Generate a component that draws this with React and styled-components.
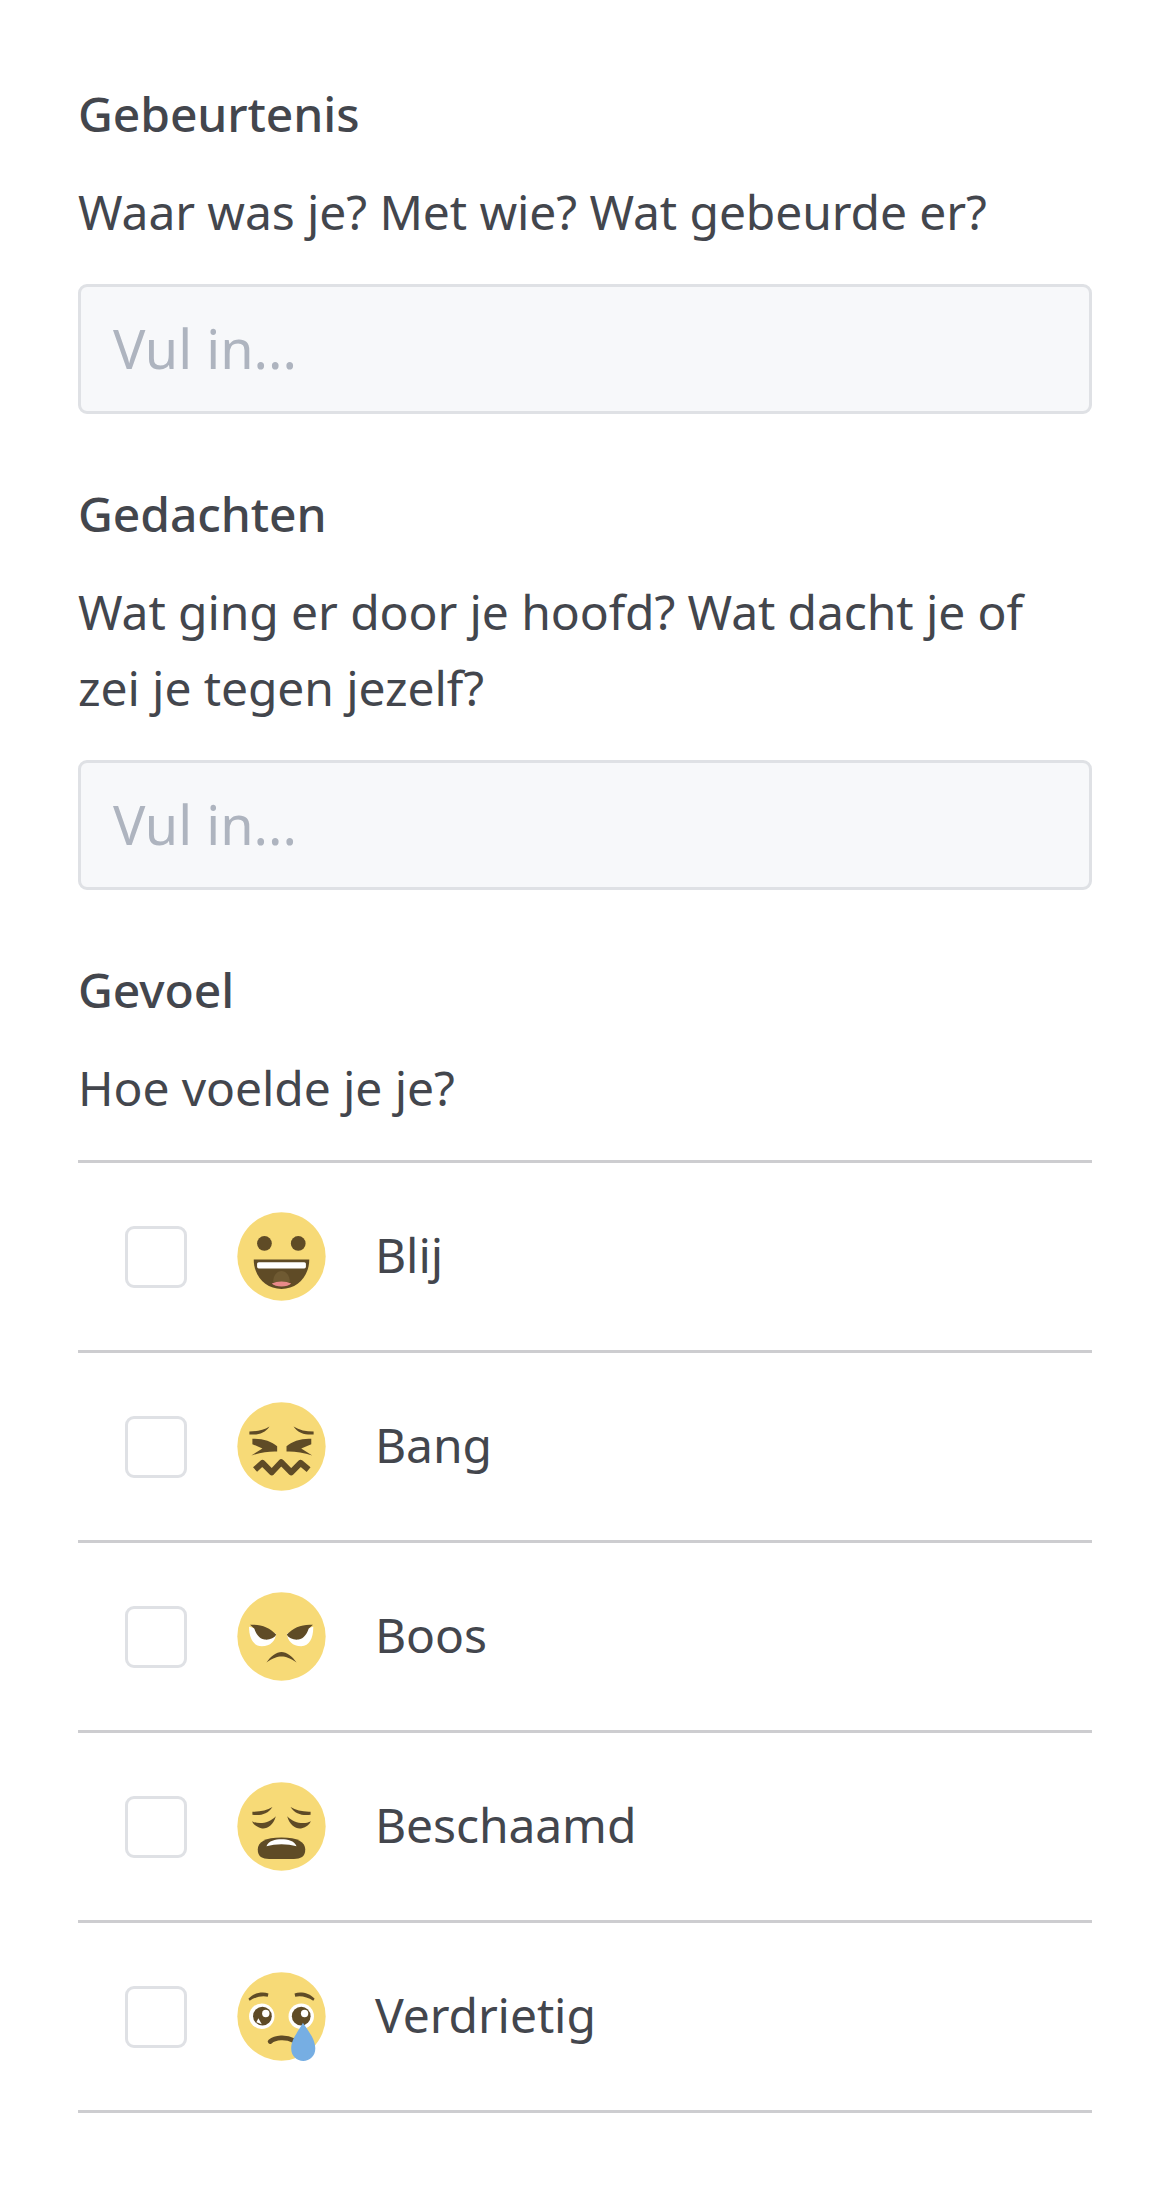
import React from 'react';
import styled, { createGlobalStyle } from 'styled-components';

const GlobalStyle = createGlobalStyle`
  html, body { margin: 0; padding: 0; background: #fff; }
  body { font-family: "Noto Sans", "Open Sans", sans-serif; color: #43464d; }
`;

const Page = styled.div`
  width: 1170px;
  height: 2200px;
  padding: 86px 78px 0;
  box-sizing: border-box;
  overflow: hidden;
`;

const Field = styled.section`
  margin-bottom: 72px;
`;

const Title = styled.h2`
  margin: 0;
  font-size: 48px;
  line-height: 56px;
  font-weight: 500;
  letter-spacing: -0.1px;
`;

const Help = styled.p`
  margin: 32px 0 34px;
  font-size: 48px;
  line-height: 76px;
  font-weight: 400;
  letter-spacing: -0.1px;
`;

const Input = styled.input`
  display: block;
  width: 100%;
  height: 130px;
  padding: 0 32px 3px;
  box-sizing: border-box;
  background: #f7f8fa;
  border: 3px solid #dfe1e5;
  border-radius: 9px;
  font: inherit;
  font-size: 54px;
  color: #43464d;
  outline: none;
  &::placeholder { color: #aeb4bf; opacity: 1; }
`;

const Moods = styled.ul`
  list-style: none;
  margin: 0;
  padding: 0;
  border-top: 3px solid #cdcdd0;
`;

const Mood = styled.li`
  display: flex;
  align-items: center;
  height: 190px;
  box-sizing: border-box;
  padding-left: 47px;
  border-bottom: 3px solid #cdcdd0;
`;

const Box = styled.span`
  flex: none;
  width: 62px;
  height: 62px;
  box-sizing: border-box;
  background: #fff;
  border: 3px solid #dfe1e5;
  border-radius: 9px;
`;

const Face = styled.svg`
  flex: none;
  width: 89px;
  height: 89px;
  margin: 0 49px 0 50px;
  overflow: visible;
`;

const Label = styled.span`
  margin-bottom: 5px;
  font-size: 48px;
  letter-spacing: -0.1px;
`;

const BROWN = '#5f4b26';

const faces = {
  blij: (
    <>
      <circle cx="492" cy="160" r="22" fill={BROWN} />
      <circle cx="593" cy="160" r="22" fill={BROWN} />
      <path d="M460 208H626C626 258 590 296 543 296C496 296 460 258 460 208Z" fill={BROWN} />
      <rect x="470" y="216" width="146" height="19" rx="5" fill="#fff" />
      <path d="M518 275C518 255 530 242 543 242C556 242 568 255 568 275Z" fill="#6f5a32" />
      <path d="M514 280C530 272 556 272 572 280C562 292 524 292 514 280Z" fill="#e98a8a" />
    </>
  ),
  bang: (
    <>
      <path d="M447 154C470 154 490 150 507 139C494 160 470 165 447 163Z" fill={BROWN} />
      <path d="M639 154C616 154 596 150 579 139C592 160 616 165 639 163Z" fill={BROWN} />
      <path d="M456 176C484 174 514 184 530 198V214C510 213 480 216 453 226L486 205L456 192Z" fill={BROWN} />
      <path d="M632 176C604 174 574 184 558 198V214C578 213 608 216 635 226L602 205L632 192Z" fill={BROWN} />
      <path d="M464 268L486 248L514 276L542 246L572 276L600 248L624 268" fill="none" stroke={BROWN} strokeWidth="18" strokeLinejoin="round" />
    </>
  ),
  boos: (
    <>
      <path d="M446 170L526 190C526 212 510 228 484 228C460 228 446 205 446 170Z" fill="#fff" />
      <path d="M638 170L560 190C560 212 576 228 602 228C626 228 638 205 638 170Z" fill="#fff" />
      <path d="M449 164C480 161 508 172 527 193C522 204 506 210 492 208C476 206 466 190 462 176Z" fill={BROWN} />
      <path d="M637 164C606 161 578 172 559 193C564 204 580 210 594 208C610 206 620 190 624 176Z" fill={BROWN} />
      <path d="M498 277C510 258 528 245 543 245C558 245 576 258 588 277C570 264 556 259 543 259C530 259 516 264 498 277Z" fill={BROWN} />
    </>
  ),
  beschaamd: (
    <>
      <path d="M456 155C480 156 500 150 516 141C502 164 478 167 456 164Z" fill={BROWN} />
      <path d="M630 155C606 156 586 150 570 141C584 164 608 167 630 164Z" fill={BROWN} />
      <path d="M455 183C475 194 505 190 526 168C518 196 498 208 482 204C470 201 460 194 455 183Z" fill={BROWN} />
      <path d="M631 183C611 194 581 190 560 168C568 196 588 208 604 204C616 201 626 194 631 183Z" fill={BROWN} />
      <path d="M472 268C472 246 494 232 543 232C592 232 614 246 614 268C614 290 600 296 580 296H506C486 296 472 290 472 268Z" fill={BROWN} />
      <path d="M498 258C505 241 524 237 543 237C562 237 581 241 588 258C560 250 526 250 498 258Z" fill="#fff" />
    </>
  ),
  verdrietig: (
    <>
      <path d="M444 146C460 128 486 124 504 130L502 140C486 136 466 140 448 152Z" fill={BROWN} />
      <path d="M642 146C626 128 600 124 582 130L584 140C600 136 620 140 638 152Z" fill={BROWN} />
      <circle cx="484" cy="198" r="38" fill="#fff" />
      <circle cx="602" cy="198" r="38" fill="#fff" />
      <circle cx="486" cy="198" r="28" fill={BROWN} />
      <circle cx="602" cy="198" r="28" fill={BROWN} />
      <circle cx="496" cy="190" r="11" fill="#fff" />
      <circle cx="612" cy="190" r="11" fill="#fff" />
      <path d="M474 204L484 222L468 216Z" fill="#fff" />
      <path d="M509 274C525 261 555 259 580 271" fill="none" stroke={BROWN} strokeWidth="14" strokeLinecap="round" />
      <path d="M607 218C622 242 644 265 644 295C644 318 627 332 608 332C589 332 572 318 572 295C572 265 595 242 607 218Z" fill="#76aee3" />
    </>
  ),
};

const moods = [
  { key: 'blij', label: 'Blij' },
  { key: 'bang', label: 'Bang' },
  { key: 'boos', label: 'Boos' },
  { key: 'beschaamd', label: 'Beschaamd' },
  { key: 'verdrietig', label: 'Verdrietig' },
];

const App = () => (
  <Page>
    <GlobalStyle />
    <Field>
      <Title>Gebeurtenis</Title>
      <Help>Waar was je? Met wie? Wat gebeurde er?</Help>
      <Input placeholder="Vul in..." />
    </Field>
    <Field>
      <Title>Gedachten</Title>
      <Help>Wat ging er door je hoofd? Wat dacht je of<br />zei je tegen jezelf?</Help>
      <Input placeholder="Vul in..." />
    </Field>
    <Title>Gevoel</Title>
    <Help>Hoe voelde je je?</Help>
    <Moods>
      {moods.map((m) => (
        <Mood key={m.key}>
          <Box />
          <Face viewBox="410 66 266 266">
            <circle cx="543" cy="199" r="132" fill="#f7da77" />
            {faces[m.key]}
          </Face>
          <Label>{m.label}</Label>
        </Mood>
      ))}
    </Moods>
  </Page>
);

export default App;
